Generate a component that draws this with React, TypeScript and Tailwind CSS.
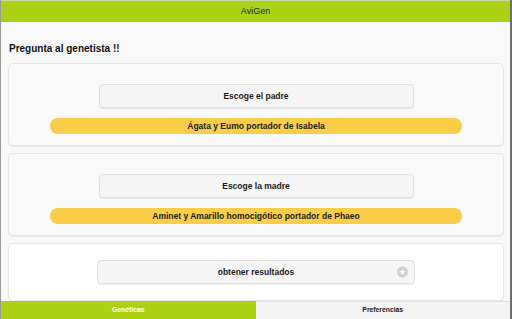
import React from "react";

function Card({ white, btn, pill, star }: { white?: boolean; btn: string; pill?: string; star?: boolean }) {
  return (
    <div
      className={`ml-[7px] mr-[6px] rounded-[5px] border border-[#e6e6e6] shadow-[0_1px_1px_rgba(0,0,0,0.06)] ${
        white ? "bg-white pt-[16px] pb-[16px]" : "bg-[#f9f9f9] pt-[20px] pb-[11px]"
      }`}
    >
      <div className="flex justify-center">
        <div
          className={`relative flex h-[24px] items-center justify-center rounded-[4px] border border-[#e0e0e0] bg-[#f5f5f5] shadow-[0_1px_1px_rgba(0,0,0,0.08)] text-[8.5px] font-bold text-[#1a1a1a] ${
            white ? "w-[318px]" : "w-[315px]"
          }`}
        >
          {btn}
          {star && (
            <span className="absolute right-[6px] top-1/2 flex h-[11px] w-[11px] -translate-y-1/2 items-center justify-center rounded-full bg-[#d0d0d0]">
              <svg width="7" height="7" viewBox="0 0 24 24">
                <path d="M12 2l2.9 6.6 7.1.6-5.4 4.7 1.6 7.1L12 17.3 5.8 21l1.6-7.1L2 9.2l7.1-.6z" fill="#fff" />
              </svg>
            </span>
          )}
        </div>
      </div>
      {pill && (
        <div className="mx-[41px] mt-[10px] flex h-[16px] items-center justify-center rounded-full bg-[#f9cd48] text-[8.5px] font-bold text-[#222]">
          {pill}
        </div>
      )}
    </div>
  );
}

export default function App() {
  return (
    <div
      className="flex h-[319px] w-[512px] flex-col overflow-hidden border-l border-l-[#9a9a9a] border-r-2 border-r-[#6f6f6f] bg-[#f8f8f8]"
      style={{ fontFamily: '"Liberation Sans", Arial, sans-serif' }}
    >
      <div className="flex h-[22px] shrink-0 items-center justify-center border-t border-t-[#c8d9a0] bg-[#acd114] text-[9px] text-[#222]">
        AviGen
      </div>
      <div className="flex min-h-0 flex-1 flex-col">
        <div className="pl-[8px] pt-[20px] pb-[7px] text-[10px] leading-[14px] font-bold text-[#111]">Pregunta al genetista !!</div>
        <div className="flex flex-col gap-[7px]">
          <Card btn="Escoge el padre" pill="Ágata y Eumo portador de Isabela" />
          <Card btn="Escoge la madre" pill="Aminet y Amarillo homocigótico portador de Phaeo" />
          <Card white btn="obtener resultados" star />
        </div>
      </div>
      <div className="flex h-[18px] shrink-0 text-[6.8px] font-bold">
        <div className="flex w-1/2 items-center justify-center bg-[#acd114] text-white">Genéticas</div>
        <div className="flex w-1/2 items-center justify-center border-t border-t-[#e0e0e0] bg-[#f4f4f4] text-[#222]">
          Preferencias
        </div>
      </div>
    </div>
  );
}
